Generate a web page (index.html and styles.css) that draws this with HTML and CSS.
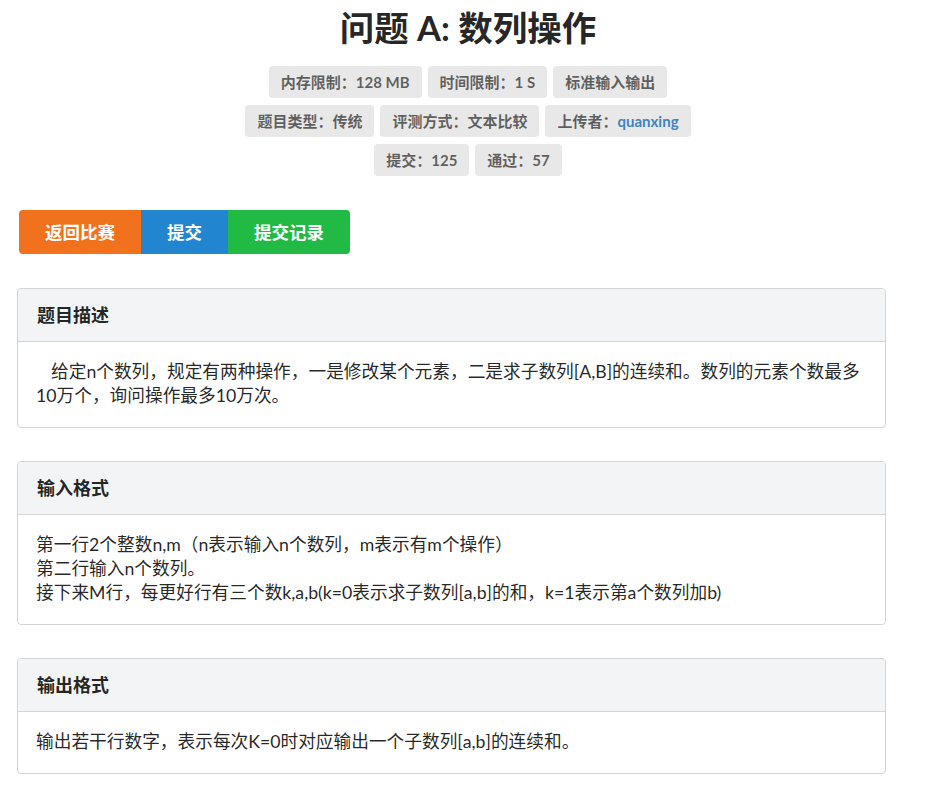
FILE: index.html
```html
<!DOCTYPE html>
<html lang="zh">
<head>
<meta charset="utf-8">
<link rel="stylesheet" href="styles.css">
</head>
<body>
<div class="page">
  <h1 class="title">问题 A: 数列操作</h1>
  <div class="labels">
    <div class="label-row">
      <span class="label">内存限制：128 MB</span>
      <span class="label">时间限制：1 S</span>
      <span class="label">标准输入输出</span>
    </div>
    <div class="label-row">
      <span class="label">题目类型：传统</span>
      <span class="label">评测方式：文本比较</span>
      <span class="label">上传者：<a class="user">quanxing</a></span>
    </div>
    <div class="label-row">
      <span class="label">提交：125</span>
      <span class="label">通过：57</span>
    </div>
  </div>
  <div class="buttons">
    <span class="btn orange">返回比赛</span>
    <span class="btn blue">提交</span>
    <span class="btn green">提交记录</span>
  </div>
  <div class="sections">
    <div class="card">
      <div class="card-head">题目描述</div>
      <div class="card-body"><p class="indent">给定n个数列，规定有两种操作，一是修改某个元素，二是求子数列[A,B]的连续和。数列的元素个数最多10万个，询问操作最多10万次。</p></div>
    </div>
    <div class="card">
      <div class="card-head">输入格式</div>
      <div class="card-body"><p>第一行2个整数n,m（n表示输入n个数列，m表示有m个操作）<br>第二行输入n个数列。<br>接下来M行，每更好行有三个数k,a,b(k=0表示求子数列[a,b]的和，k=1表示第a个数列加b)</p></div>
    </div>
    <div class="card">
      <div class="card-head">输出格式</div>
      <div class="card-body"><p>输出若干行数字，表示每次K=0时对应输出一个子数列[a,b]的连续和。</p></div>
    </div>
  </div>
</div>
</body>
</html>
```

FILE: styles.css
```css
html, body {
  margin: 0;
  padding: 0;
  background: #ffffff;
}
body {
  font-family: Lato, "Noto Sans CJK SC", sans-serif;
  color: rgba(0, 0, 0, 0.87);
}
.page {
  padding-top: 6px;
}
.title {
  margin: 0;
  text-align: center;
  font-size: 34.5px;
  line-height: 44px;
  font-weight: 700;
  color: rgba(0, 0, 0, 0.87);
}
.labels {
  margin-top: 16px;
  display: flex;
  flex-direction: column;
  gap: 7px;
  align-items: center;
}
.label-row {
  display: flex;
  gap: 6px;
  justify-content: center;
}
.label {
  background: #e8e8e8;
  color: rgba(0, 0, 0, 0.6);
  font-size: 15px;
  font-weight: 700;
  line-height: 16px;
  padding: 8px 12px;
  border-radius: 4px;
}
.user {
  color: #4183c4;
}
.buttons {
  margin: 34px 0 0 19px;
  display: flex;
}
.btn {
  color: #fff;
  font-size: 17.5px;
  font-weight: 700;
  line-height: 19px;
  padding: 13px 26px 12px 26px;
}
.orange {
  background: #f2711c;
  border-radius: 4px 0 0 4px;
}
.blue {
  background: #2185d0;
}
.green {
  background: #21ba45;
  border-radius: 0 4px 4px 0;
}
.sections {
  margin: 34px 0 0 17px;
  width: 869px;
  display: flex;
  flex-direction: column;
  gap: 33px;
}
.card {
  border: 1px solid #d4d4d5;
  border-radius: 4px;
  overflow: hidden;
}
.card-head {
  background: #f3f4f5;
  border-bottom: 1px solid #d4d4d5;
  font-size: 18px;
  font-weight: 700;
  line-height: 23px;
  padding: 15px 19px 14px 19px;
}
.card-body {
  padding: 18px 18px 19px 18px;
  font-size: 17.7px;
  line-height: 24px;
}
.card-body p {
  margin: 0;
}
.indent {
  text-indent: 15px;
}
```
